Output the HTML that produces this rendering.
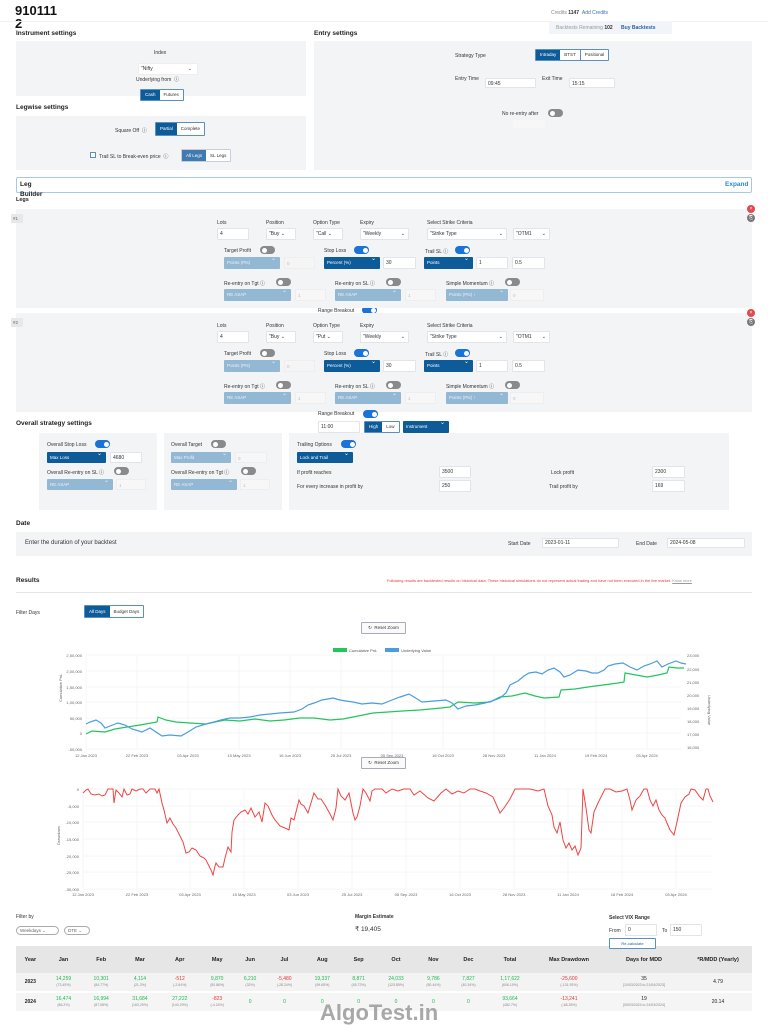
<!DOCTYPE html>
<html><head><meta charset="utf-8">
<style>
*{box-sizing:border-box;margin:0;padding:0}
body{width:768px;height:1024px;overflow:hidden;background:#fff;font-family:"Liberation Sans",sans-serif;color:#222;position:relative;font-size:5px}
.a{position:absolute;white-space:nowrap}
.p{position:absolute;background:#f3f4f5}
.t{position:absolute;font-weight:bold;font-size:6.5px;color:#222}
.l{position:absolute;font-size:5px;color:#333;white-space:nowrap}
.in{position:absolute;background:#fff;border:1px solid #e2e4e8;border-radius:1px;font-size:5px;padding:3px 2px;color:#333;white-space:nowrap;line-height:5px}
.sd{position:absolute;background:#0d5c99;color:#fff;font-size:4.5px;padding:3px 3px;line-height:5px;border-radius:1px;white-space:nowrap}
.sl{position:absolute;background:#93b8d3;color:#eef;font-size:4.5px;padding:3px 3px;line-height:5px;border-radius:1px;white-space:nowrap}
.sd:after,.sl:after{content:"⌄";position:absolute;right:4px;top:0px;font-size:6px}
.tg{position:absolute;width:15px;height:8px;border-radius:4px;background:#8a8a8a}
.tg:after{content:"";position:absolute;left:1.5px;top:1.5px;width:5px;height:5px;border-radius:50%;background:#fff}
.tg.on{background:#1a73d9}
.tg.on:after{left:8.5px}
.bg{position:absolute;display:flex;border:1px solid #5a8fc0;border-radius:1px;font-size:4.5px;height:12px;line-height:10px;background:#fff}
.bg span{padding:0 4px;color:#333}
.bg span.on{background:#0d5c99;color:#fff}
.dis{position:absolute;background:#f7f7f7;border:1px solid #eee;font-size:4.5px;color:#bbb;padding:3px 2px;line-height:5px}
table{position:absolute;left:16px;top:946px;width:736px;border-collapse:collapse;font-size:5px;text-align:center}
th{background:#e6e6e6;height:27px;font-weight:bold;font-size:5.5px}
td{height:19px;line-height:6px}
tr.r1 td{background:#f3f3f3}
tr.r2 td{background:#f5f5f5;border-top:2px solid #fff}
.g{color:#1db954}.r{color:#e53935}
small{font-size:3.5px;color:#888;display:block}
</style></head><body>

<div class="a" style="left:15px;top:4px;font-size:13px;font-weight:bold;line-height:13px;color:#111">910111<br>2</div>
<div class="a" style="left:551px;top:10px;font-size:5px;color:#888">Credits <b style="color:#333">1147</b> &nbsp;<span style="color:#3a6fb5">Add Credits</span></div>
<div class="a" style="left:0;top:21px;width:768px;height:1px;background:#f0f0f0"></div>
<div class="a" style="left:549px;top:21px;width:123px;height:13px;background:#f1f4f8;font-size:5px;color:#999;padding:4px 7px">Backtests Remaining <b style="color:#333">102</b> &nbsp;&nbsp;&nbsp;&nbsp;&nbsp;<b style="color:#2c5f9e">Buy Backtests</b></div>

<div class="t" style="left:16px;top:30px">Instrument settings</div>
<div class="t" style="left:314px;top:30px">Entry settings</div>
<div class="p" style="left:16px;top:41px;width:290px;height:55px"></div>
<div class="l" style="left:154px;top:50px">Index</div>
<div class="in" style="left:138px;top:63px;width:60px;height:12px;border-color:#eee">"Nifty<span style="position:absolute;right:5px">⌄</span></div>
<div class="l" style="left:136px;top:76px">Underlying from &nbsp;ⓘ</div>
<div class="bg" style="left:140px;top:89px"><span class="on">Cash</span><span>Futures</span></div>

<div class="t" style="left:16px;top:104px">Legwise settings</div>
<div class="p" style="left:16px;top:116px;width:290px;height:54px"></div>
<div class="l" style="left:115px;top:127px">Square Off &nbsp;ⓘ</div>
<div class="bg" style="left:155px;top:122px;height:14px;line-height:12px"><span class="on">Partial</span><span>Complete</span></div>
<div class="a" style="left:90px;top:152px;width:6px;height:6px;border:1px solid #5a8fc0;background:#fff"></div>
<div class="l" style="left:99px;top:153px">Trail SL to Break-even price &nbsp;ⓘ</div>
<div class="bg" style="left:181px;top:149px;height:13px;line-height:11px;border-color:#ccd"><span class="on" style="background:#3f7ab0">All Legs</span><span>SL Legs</span></div>

<div class="p" style="left:314px;top:41px;width:438px;height:129px"></div>
<div class="l" style="left:455px;top:53px">Strategy Type</div>
<div class="bg" style="left:535px;top:49px"><span class="on">Intraday</span><span>BTST</span><span style="border-left:1px solid #5a8fc0">Positional</span></div>
<div class="l" style="left:455px;top:76px">Entry Time</div>
<div class="in" style="left:485px;top:78px;width:51px;height:10px">09:45</div>
<div class="l" style="left:542px;top:76px">Exit Time</div>
<div class="in" style="left:569px;top:78px;width:46px;height:10px">15:15</div>
<div class="l" style="left:502px;top:111px">No re-entry after</div>
<div class="tg" style="left:548px;top:109px"></div>
<div class="a" style="left:513px;top:120px;width:32px;height:8px;background:#f7f7f7"></div>

<div class="a" style="left:16px;top:177px;width:736px;height:16px;border:1px solid #a8c8e8;border-radius:2px"></div>
<div class="t" style="left:20px;top:181px">Leg</div>
<div class="a" style="left:725px;top:181px;font-size:6.5px;font-weight:bold;color:#2a8ad8">Expand</div>
<div class="t" style="left:20px;top:191px">Builder</div>
<div class="t" style="left:16px;top:197px;font-size:5.5px">Legs</div>

<div class="l" style="left:318px;top:308px">Range Breakout</div>
<div class="tg on" style="left:362px;top:306px"></div>

<!-- LEG 1 -->
<div class="p" style="left:16px;top:209px;width:736px;height:99px"></div>
<div class="a" style="left:11px;top:214px;width:12px;height:9px;background:#e8e8e8;font-size:4.5px;color:#666;padding:2px">#1</div>
<div class="a" style="left:747px;top:205px;width:8px;height:8px;border-radius:50%;background:#e5484d;color:#fff;font-size:5px;text-align:center;line-height:8px">×</div>
<div class="a" style="left:747px;top:214px;width:8px;height:8px;border-radius:50%;background:#777;color:#fff;font-size:5px;text-align:center;line-height:8px">⎘</div>
<div class="l" style="left:217px;top:220px">Lots</div><div class="l" style="left:266px;top:220px">Position</div><div class="l" style="left:313px;top:220px">Option Type</div><div class="l" style="left:360px;top:220px">Expiry</div><div class="l" style="left:427px;top:220px">Select Strike Criteria</div>
<div class="in" style="left:217px;top:228px;width:32px;height:12px">4</div>
<div class="in" style="left:266px;top:228px;width:30px;height:12px">"Buy ⌄</div>
<div class="in" style="left:313px;top:228px;width:30px;height:12px">"Call ⌄</div>
<div class="in" style="left:360px;top:228px;width:49px;height:12px">"Weekly<span style="position:absolute;right:3px">⌄</span></div>
<div class="in" style="left:427px;top:228px;width:80px;height:12px">"Strike Type<span style="position:absolute;right:3px">⌄</span></div>
<div class="in" style="left:513px;top:228px;width:37px;height:12px">"OTM1<span style="position:absolute;right:3px">⌄</span></div>
<div class="l" style="left:224px;top:248px">Target Profit</div><div class="tg" style="left:260px;top:246px"></div>
<div class="l" style="left:324px;top:248px">Stop Loss</div><div class="tg on" style="left:354px;top:246px"></div>
<div class="l" style="left:425px;top:248px">Trail SL ⓘ</div><div class="tg on" style="left:455px;top:246px"></div>
<div class="sl" style="left:224px;top:257px;width:56px;height:12px">Points (Pts)</div>
<div class="dis" style="left:284px;top:257px;width:31px;height:12px;background:#f5f5f5">0</div>
<div class="sd" style="left:324px;top:257px;width:56px;height:12px">Percent (%)</div>
<div class="in" style="left:383px;top:257px;width:33px;height:12px">30</div>
<div class="sd" style="left:424px;top:257px;width:49px;height:12px">Points</div>
<div class="in" style="left:476px;top:257px;width:32px;height:12px">1</div>
<div class="in" style="left:512px;top:257px;width:33px;height:12px">0.5</div>
<div class="l" style="left:224px;top:280px">Re-entry on Tgt ⓘ</div><div class="tg" style="left:276px;top:278px"></div>
<div class="l" style="left:335px;top:280px">Re-entry on SL ⓘ</div><div class="tg" style="left:386px;top:278px"></div>
<div class="l" style="left:446px;top:280px">Simple Momentum ⓘ</div><div class="tg" style="left:505px;top:278px"></div>
<div class="sl" style="left:224px;top:289px;width:67px;height:12px">RE ASAP</div>
<div class="dis" style="left:295px;top:289px;width:31px;height:12px">1</div>
<div class="sl" style="left:335px;top:289px;width:66px;height:12px">RE ASAP</div>
<div class="dis" style="left:405px;top:289px;width:31px;height:12px">1</div>
<div class="sl" style="left:446px;top:289px;width:62px;height:12px">Points (Pts) ↑</div>
<div class="dis" style="left:510px;top:289px;width:34px;height:12px">0</div>

<!-- LEG 2 -->
<div class="p" style="left:16px;top:313px;width:736px;height:99px"></div>
<div class="a" style="left:11px;top:318px;width:12px;height:9px;background:#e8e8e8;font-size:4.5px;color:#666;padding:2px">#2</div>
<div class="a" style="left:747px;top:309px;width:8px;height:8px;border-radius:50%;background:#e5484d;color:#fff;font-size:5px;text-align:center;line-height:8px">×</div>
<div class="a" style="left:747px;top:318px;width:8px;height:8px;border-radius:50%;background:#777;color:#fff;font-size:5px;text-align:center;line-height:8px">⎘</div>
<div class="l" style="left:217px;top:323px">Lots</div><div class="l" style="left:266px;top:323px">Position</div><div class="l" style="left:313px;top:323px">Option Type</div><div class="l" style="left:360px;top:323px">Expiry</div><div class="l" style="left:427px;top:323px">Select Strike Criteria</div>
<div class="in" style="left:217px;top:331px;width:32px;height:12px">4</div>
<div class="in" style="left:266px;top:331px;width:30px;height:12px">"Buy ⌄</div>
<div class="in" style="left:313px;top:331px;width:30px;height:12px">"Put ⌄</div>
<div class="in" style="left:360px;top:331px;width:49px;height:12px">"Weekly<span style="position:absolute;right:3px">⌄</span></div>
<div class="in" style="left:427px;top:331px;width:80px;height:12px">"Strike Type<span style="position:absolute;right:3px">⌄</span></div>
<div class="in" style="left:513px;top:331px;width:37px;height:12px">"OTM1<span style="position:absolute;right:3px">⌄</span></div>
<div class="l" style="left:224px;top:351px">Target Profit</div><div class="tg" style="left:260px;top:349px"></div>
<div class="l" style="left:324px;top:351px">Stop Loss</div><div class="tg on" style="left:354px;top:349px"></div>
<div class="l" style="left:425px;top:351px">Trail SL ⓘ</div><div class="tg on" style="left:455px;top:349px"></div>
<div class="sl" style="left:224px;top:360px;width:56px;height:12px">Points (Pts)</div>
<div class="dis" style="left:284px;top:360px;width:31px;height:12px;background:#f5f5f5">0</div>
<div class="sd" style="left:324px;top:360px;width:56px;height:12px">Percent (%)</div>
<div class="in" style="left:383px;top:360px;width:33px;height:12px">30</div>
<div class="sd" style="left:424px;top:360px;width:49px;height:12px">Points</div>
<div class="in" style="left:476px;top:360px;width:32px;height:12px">1</div>
<div class="in" style="left:512px;top:360px;width:33px;height:12px">0.5</div>
<div class="l" style="left:224px;top:383px">Re-entry on Tgt ⓘ</div><div class="tg" style="left:276px;top:381px"></div>
<div class="l" style="left:335px;top:383px">Re-entry on SL ⓘ</div><div class="tg" style="left:386px;top:381px"></div>
<div class="l" style="left:446px;top:383px">Simple Momentum ⓘ</div><div class="tg" style="left:505px;top:381px"></div>
<div class="sl" style="left:224px;top:392px;width:67px;height:12px">RE ASAP</div>
<div class="dis" style="left:295px;top:392px;width:31px;height:12px">1</div>
<div class="sl" style="left:335px;top:392px;width:66px;height:12px">RE ASAP</div>
<div class="dis" style="left:405px;top:392px;width:31px;height:12px">1</div>
<div class="sl" style="left:446px;top:392px;width:62px;height:12px">Points (Pts) ↑</div>
<div class="dis" style="left:510px;top:392px;width:34px;height:12px">0</div>

<div class="l" style="left:318px;top:411px">Range Breakout</div><div class="tg on" style="left:363px;top:410px"></div>
<div class="in" style="left:318px;top:421px;width:42px;height:12px">11:00</div>
<div class="bg" style="left:364px;top:421px;height:12px"><span class="on">High</span><span>Low</span></div>
<div class="sd" style="left:403px;top:421px;width:46px;height:12px">Instrument</div>

<div class="t" style="left:16px;top:420px">Overall strategy settings</div>
<div class="p" style="left:39px;top:433px;width:118px;height:77px"></div>
<div class="p" style="left:164px;top:433px;width:118px;height:77px"></div>
<div class="p" style="left:289px;top:433px;width:440px;height:77px"></div>
<div class="l" style="left:47px;top:442px">Overall Stop Loss</div><div class="tg on" style="left:95px;top:440px"></div>
<div class="sd" style="left:47px;top:452px;width:59px;height:11px">Max Loss</div>
<div class="in" style="left:110px;top:452px;width:32px;height:11px">4680</div>
<div class="l" style="left:47px;top:469px">Overall Re-entry on SL ⓘ</div><div class="tg" style="left:114px;top:467px"></div>
<div class="sl" style="left:47px;top:479px;width:66px;height:11px">RE ASAP</div>
<div class="dis" style="left:116px;top:479px;width:30px;height:11px">1</div>
<div class="l" style="left:171px;top:442px">Overall Target</div><div class="tg" style="left:211px;top:440px"></div>
<div class="sl" style="left:171px;top:452px;width:60px;height:11px">Max Profit</div>
<div class="dis" style="left:235px;top:452px;width:32px;height:11px">0</div>
<div class="l" style="left:171px;top:469px">Overall Re-entry on Tgt ⓘ</div><div class="tg" style="left:241px;top:467px"></div>
<div class="sl" style="left:171px;top:479px;width:66px;height:11px">RE ASAP</div>
<div class="dis" style="left:240px;top:479px;width:30px;height:11px">1</div>
<div class="l" style="left:297px;top:442px">Trailing Options</div><div class="tg on" style="left:341px;top:440px"></div>
<div class="sd" style="left:297px;top:452px;width:56px;height:11px">Lock and Trail</div>
<div class="l" style="left:297px;top:470px">If profit reaches</div>
<div class="in" style="left:439px;top:466px;width:32px;height:12px">3500</div>
<div class="l" style="left:551px;top:470px">Lock profit</div>
<div class="in" style="left:652px;top:466px;width:33px;height:12px">2300</div>
<div class="l" style="left:297px;top:484px">For every increase in profit by</div>
<div class="in" style="left:439px;top:480px;width:32px;height:12px">250</div>
<div class="l" style="left:549px;top:484px">Trail profit by</div>
<div class="in" style="left:652px;top:480px;width:33px;height:12px">169</div>

<div class="t" style="left:16px;top:520px">Date</div>
<div class="p" style="left:16px;top:532px;width:736px;height:24px"></div>
<div class="l" style="left:25px;top:540px;font-size:6px">Enter the duration of your backtest</div>
<div class="l" style="left:508px;top:541px">Start Date</div>
<div class="in" style="left:542px;top:538px;width:77px;height:10px;padding:2px">2023-01-11</div>
<div class="l" style="left:636px;top:541px">End Date</div>
<div class="in" style="left:667px;top:538px;width:78px;height:10px;padding:2px">2024-05-08</div>

<div class="t" style="left:16px;top:577px">Results</div>
<div class="a" style="left:387px;top:578px;font-size:3.9px;color:#e53935">Following results are backtested results on historical data. These historical simulations do not represent actual trading and have not been executed in the live market. <span style="color:#999;text-decoration:underline">Know more</span></div>
<div class="a" style="left:16px;top:592px;width:736px;height:1px;background:#e5e5e5"></div>
<div class="l" style="left:16px;top:610px">Filter Days</div>
<div class="bg" style="left:84px;top:605px;height:13px;line-height:11px"><span class="on">All Days</span><span>Budget Days</span></div>

<div class="a" style="left:361px;top:622px;width:45px;height:12px;border:1px solid #aab;border-radius:1px;background:#fafafa;font-size:4.5px;line-height:10px;text-align:center;color:#333">↻ &nbsp;Reset Zoom</div>

<svg class="a" style="left:0;top:640px" width="768" height="120" viewBox="0 640 768 120">
<g stroke="#eee" stroke-width="0.5">
<line x1="86" y1="655" x2="681" y2="655"/><line x1="86" y1="671" x2="681" y2="671"/><line x1="86" y1="687" x2="681" y2="687"/><line x1="86" y1="702" x2="681" y2="702"/><line x1="86" y1="718" x2="681" y2="718"/><line x1="86" y1="733" x2="681" y2="733"/><line x1="86" y1="749" x2="681" y2="749"/>
<line x1="86" y1="655" x2="86" y2="749"/><line x1="137" y1="655" x2="137" y2="749"/><line x1="188" y1="655" x2="188" y2="749"/><line x1="239" y1="655" x2="239" y2="749"/><line x1="290" y1="655" x2="290" y2="749"/><line x1="341" y1="655" x2="341" y2="749"/><line x1="392" y1="655" x2="392" y2="749"/><line x1="443" y1="655" x2="443" y2="749"/><line x1="494" y1="655" x2="494" y2="749"/><line x1="545" y1="655" x2="545" y2="749"/><line x1="596" y1="655" x2="596" y2="749"/><line x1="647" y1="655" x2="647" y2="749"/>
</g>
<rect x="333" y="648" width="14" height="4" fill="#22c55e"/><text x="349" y="652" font-size="4" fill="#555">Cumulative PnL</text>
<rect x="385" y="648" width="14" height="4" fill="#4a9de0"/><text x="401" y="652" font-size="4" fill="#555">Underlying Value</text>
<g font-size="4" fill="#666" text-anchor="end">
<text x="82" y="657">2,50,000</text><text x="82" y="673">2,00,000</text><text x="82" y="689">1,50,000</text><text x="82" y="704">1,00,000</text><text x="82" y="720">50,000</text><text x="82" y="735">0</text><text x="82" y="751">-50,000</text>
</g>
<g font-size="4" fill="#666">
<text x="687" y="657">23,000</text><text x="687" y="671">22,000</text><text x="687" y="684">21,000</text><text x="687" y="697">20,000</text><text x="687" y="710">19,000</text><text x="687" y="723">18,000</text><text x="687" y="736">17,000</text><text x="687" y="749">16,000</text>
</g>
<text x="62" y="702" font-size="4" fill="#666" transform="rotate(-90 62 702)">Cumulative PnL</text>
<text x="708" y="695" font-size="4" fill="#666" transform="rotate(90 708 695)">Underlying Value</text>
<g font-size="4" fill="#666" text-anchor="middle">
<text x="86" y="757">12 Jan 2023</text><text x="137" y="757">22 Feb 2023</text><text x="188" y="757">03 Apr 2023</text><text x="239" y="757">15 May 2023</text><text x="290" y="757">16 Jun 2023</text><text x="341" y="757">25 Jul 2023</text><text x="392" y="757">05 Sep 2023</text><text x="443" y="757">16 Oct 2023</text><text x="494" y="757">28 Nov 2023</text><text x="545" y="757">11 Jan 2024</text><text x="596" y="757">19 Feb 2024</text><text x="647" y="757">03 Apr 2024</text>
</g>
<polyline fill="none" stroke="#22c55e" stroke-width="1.2" points="86,734 92,731 105,732 115,729 127,727 140,725 157,722 158,717 166,720 176,722 190,723 206,724 215,722 225,720 240,721 255,719 270,721 284,720 300,718 314,718 330,720 343,719 358,716 373,713 388,712 402,711 420,710 441,708 450,707 458,702 475,703 490,702 500,697 512,696 525,693 535,696 544,698 559,697 561,690 575,689 588,687 603,685 618,683 624,682 625,673 636,675 647,677 658,675 667,673 669,667 677,668 684,668"/>
<polyline fill="none" stroke="#4a9de0" stroke-width="1.2" points="86,724 90,722 96,720 101,723 105,728 110,726 118,723 125,725 132,729 142,732 150,728 156,732 162,736 170,735 181,736 188,732 196,727 206,724 214,722 221,720 230,718 240,718 250,717 260,715 270,714 280,713 294,712 302,709 308,705 314,703 322,700 333,698 340,700 346,701 353,702 362,704 372,703 382,704 392,700 400,697 409,694 414,697 422,702 434,701 446,700 452,703 458,709 466,706 475,705 485,703 492,701 500,698 506,693 510,685 518,681 524,676 529,673 536,672 542,674 548,670 554,668 560,672 564,677 570,675 578,670 586,671 592,673 598,673 604,670 608,666 615,664 623,663 630,667 637,670 644,666 650,664 657,661 662,667 668,664 676,661 681,663 686,664"/>
</svg>

<div class="a" style="left:361px;top:757px;width:45px;height:12px;border:1px solid #aab;border-radius:1px;background:#fafafa;font-size:4.5px;line-height:10px;text-align:center;color:#333">↻ &nbsp;Reset Zoom</div>

<svg class="a" style="left:0;top:775px" width="768" height="125" viewBox="0 775 768 125">
<g stroke="#eee" stroke-width="0.5">
<line x1="83" y1="789" x2="712" y2="789"/><line x1="83" y1="806" x2="712" y2="806"/><line x1="83" y1="822" x2="712" y2="822"/><line x1="83" y1="839" x2="712" y2="839"/><line x1="83" y1="856" x2="712" y2="856"/><line x1="83" y1="872" x2="712" y2="872"/><line x1="83" y1="889" x2="712" y2="889"/>
<line x1="83" y1="789" x2="83" y2="889"/><line x1="137" y1="789" x2="137" y2="889"/><line x1="190" y1="789" x2="190" y2="889"/><line x1="244" y1="789" x2="244" y2="889"/><line x1="298" y1="789" x2="298" y2="889"/><line x1="352" y1="789" x2="352" y2="889"/><line x1="406" y1="789" x2="406" y2="889"/><line x1="460" y1="789" x2="460" y2="889"/><line x1="514" y1="789" x2="514" y2="889"/><line x1="568" y1="789" x2="568" y2="889"/><line x1="622" y1="789" x2="622" y2="889"/><line x1="676" y1="789" x2="676" y2="889"/>
</g>
<g font-size="4" fill="#666" text-anchor="end">
<text x="79" y="791">0</text><text x="79" y="808">-5,000</text><text x="79" y="824">-10,000</text><text x="79" y="841">-15,000</text><text x="79" y="858">-20,000</text><text x="79" y="874">-25,000</text><text x="79" y="891">-30,000</text>
</g>
<text x="60" y="845" font-size="4" fill="#666" transform="rotate(-90 60 845)">Drawdown</text>
<g font-size="4" fill="#666" text-anchor="middle">
<text x="83" y="896">12 Jan 2023</text><text x="137" y="896">22 Feb 2023</text><text x="190" y="896">03 Apr 2023</text><text x="244" y="896">15 May 2023</text><text x="298" y="896">03 Jun 2023</text><text x="352" y="896">25 Jul 2023</text><text x="406" y="896">05 Sep 2023</text><text x="460" y="896">16 Oct 2023</text><text x="514" y="896">28 Nov 2023</text><text x="568" y="896">11 Jan 2024</text><text x="622" y="896">18 Feb 2024</text><text x="676" y="896">03 Apr 2024</text>
</g>
<polyline fill="none" stroke="#ef4444" stroke-width="1" points="83,793 86,790 88,789 91,794 95,795 99,794 102,796 105,795 108,789 113,789 114,803 116,790 119,793 122,797 124,789 127,795 130,794 132,789 136,791 140,789 143,789 146,793 150,789 155,789 157,793 159,789 162,803 164,810 167,823 170,818 173,824 176,828 180,836 183,842 186,853 189,852 192,848 196,850 200,856 204,858 206,860 209,866 211,870 213,875 215,866 216,863 219,867 223,867 225,858 228,847 231,852 232,832 234,820 238,815 241,812 245,810 248,814 251,808 255,817 259,812 262,822 265,803 268,806 272,815 275,820 280,826 285,828 289,830 291,818 294,820 297,808 299,800 301,804 304,806 308,813 314,793 318,799 321,799 325,805 330,814 333,820 336,808 338,789 341,796 345,800 349,793 353,813 355,820 357,817 360,806 363,789 366,793 370,801 372,791 375,789 382,789 386,793 392,789 398,791 404,789 410,789 414,795 420,791 428,798 434,801 441,793 446,789 452,794 458,791 464,793 470,789 475,789 480,791 486,793 493,797 500,813 504,808 510,799 515,789 520,789 530,789 538,791 544,789 548,806 552,815 554,827 557,833 560,822 563,840 566,848 569,843 572,850 575,846 578,855 581,848 583,789 586,808 589,830 591,833 594,812 598,803 601,797 605,789 610,789 616,792 622,791 627,789 630,800 632,810 636,800 640,796 644,789 647,789 650,800 653,806 656,800 659,810 662,815 665,818 667,823 670,830 674,835 677,822 681,803 685,797 689,794 691,789 695,790 700,797 703,800 706,789 708,789 710,796 713,802"/>
</svg>

<div class="l" style="left:16px;top:914px">Filter by</div>
<div class="a" style="left:16px;top:926px;width:43px;height:9px;border:1px solid #aaa;border-radius:5px;font-size:4.5px;color:#666;padding:1px 3px">Weekdays ⌄</div>
<div class="a" style="left:64px;top:926px;width:26px;height:9px;border:1px solid #aaa;border-radius:5px;font-size:4.5px;color:#666;padding:1px 3px">DTE ⌄</div>
<div class="l" style="left:355px;top:914px;font-weight:bold">Margin Estimate</div>
<div class="l" style="left:355px;top:925px;font-size:6.5px">₹ 19,405</div>
<div class="l" style="left:609px;top:915px;font-weight:bold">Select VIX Range</div>
<div class="l" style="left:609px;top:928px">From</div>
<div class="in" style="left:625px;top:924px;width:32px;height:12px">0</div>
<div class="l" style="left:662px;top:928px">To</div>
<div class="in" style="left:670px;top:924px;width:32px;height:12px">150</div>
<div class="a" style="left:609px;top:938px;width:47px;height:11px;border:1px solid #5a8fc0;border-radius:1px;background:#fff;font-size:4px;text-align:center;line-height:9px;color:#2c5f9e;z-index:2">Re-calculate</div>

<table>
<tr><th>Year</th><th>Jan</th><th>Feb</th><th>Mar</th><th>Apr</th><th>May</th><th>Jun</th><th>Jul</th><th>Aug</th><th>Sep</th><th>Oct</th><th>Nov</th><th>Dec</th><th>Total</th><th style="width:70px">Max Drawdown</th><th style="width:80px">Days for MDD</th><th style="width:68px">*R/MDD (Yearly)</th></tr>
<tr class="r1"><td><b>2023</b></td><td class="g">14,259<small>(73.45%)</small></td><td class="g">10,301<small>(84.77%)</small></td><td class="g">4,114<small>(21.2%)</small></td><td class="r">-512<small>(-2.64%)</small></td><td class="g">9,870<small>(50.86%)</small></td><td class="g">6,210<small>(32%)</small></td><td class="r">-5,480<small>(-28.24%)</small></td><td class="g">19,337<small>(99.65%)</small></td><td class="g">8,871<small>(45.72%)</small></td><td class="g">24,033<small>(123.85%)</small></td><td class="g">9,786<small>(50.44%)</small></td><td class="g">7,827<small>(40.34%)</small></td><td class="g">1,17,622<small>(606.19%)</small></td><td class="r">-25,600<small>(-131.93%)</small></td><td>35<small>[10/03/2023 to 21/04/2023]</small></td><td>4.79</td></tr>
<tr class="r2"><td><b>2024</b></td><td class="g">16,474<small>(86.2%)</small></td><td class="g">16,994<small>(87.58%)</small></td><td class="g">31,684<small>(163.29%)</small></td><td class="g">27,222<small>(140.29%)</small></td><td class="r">-823<small>(-4.24%)</small></td><td class="g">0</td><td class="g">0</td><td class="g">0</td><td class="g">0</td><td class="g">0</td><td class="g">0</td><td class="g">0</td><td class="g">93,664<small>(482.7%)</small></td><td class="r">-13,241<small>(-68.35%)</small></td><td>19<small>[05/03/2024 to 24/03/2024]</small></td><td>20.14</td></tr>
</table>

<div class="a" style="left:320px;top:1000px;font-size:22px;font-weight:bold;color:#9a9a9a;opacity:0.85">AlgoTest.in</div>
</body></html>
